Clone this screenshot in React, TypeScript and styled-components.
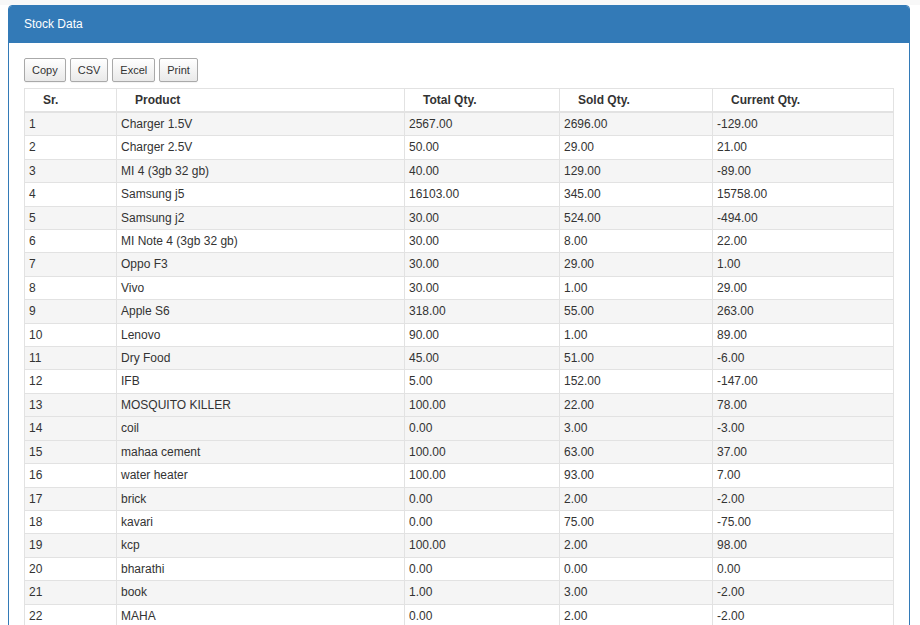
import React from "react";
import styled, { createGlobalStyle } from "styled-components";

const GlobalStyle = createGlobalStyle`
  html, body {
    margin: 0;
    padding: 0;
    background: #fff;
  }
  body {
    font-family: "Liberation Sans", Arial, sans-serif;
    color: #333;
  }
`;

type StockRow = {
  product: string;
  total: string;
  sold: string;
  current: string;
};

const rows: StockRow[] = [
  { product: "Charger 1.5V", total: "2567.00", sold: "2696.00", current: "-129.00" },
  { product: "Charger 2.5V", total: "50.00", sold: "29.00", current: "21.00" },
  { product: "MI 4 (3gb 32 gb)", total: "40.00", sold: "129.00", current: "-89.00" },
  { product: "Samsung j5", total: "16103.00", sold: "345.00", current: "15758.00" },
  { product: "Samsung j2", total: "30.00", sold: "524.00", current: "-494.00" },
  { product: "MI Note 4 (3gb 32 gb)", total: "30.00", sold: "8.00", current: "22.00" },
  { product: "Oppo F3", total: "30.00", sold: "29.00", current: "1.00" },
  { product: "Vivo", total: "30.00", sold: "1.00", current: "29.00" },
  { product: "Apple S6", total: "318.00", sold: "55.00", current: "263.00" },
  { product: "Lenovo", total: "90.00", sold: "1.00", current: "89.00" },
  { product: "Dry Food", total: "45.00", sold: "51.00", current: "-6.00" },
  { product: "IFB", total: "5.00", sold: "152.00", current: "-147.00" },
  { product: "MOSQUITO KILLER", total: "100.00", sold: "22.00", current: "78.00" },
  { product: "coil", total: "0.00", sold: "3.00", current: "-3.00" },
  { product: "mahaa cement", total: "100.00", sold: "63.00", current: "37.00" },
  { product: "water heater", total: "100.00", sold: "93.00", current: "7.00" },
  { product: "brick", total: "0.00", sold: "2.00", current: "-2.00" },
  { product: "kavari", total: "0.00", sold: "75.00", current: "-75.00" },
  { product: "kcp", total: "100.00", sold: "2.00", current: "98.00" },
  { product: "bharathi", total: "0.00", sold: "0.00", current: "0.00" },
  { product: "book", total: "1.00", sold: "3.00", current: "-2.00" },
  { product: "MAHA", total: "0.00", sold: "2.00", current: "-2.00" },
];

const columns = [
  { label: "Sr.", width: 92 },
  { label: "Product", width: 288 },
  { label: "Total Qty.", width: 155 },
  { label: "Sold Qty.", width: 153 },
  { label: "Current Qty.", width: 181 },
];

const exportButtons = ["Copy", "CSV", "Excel", "Print"];

// row that sits under the mouse in the screenshot
const hoveredIndex = 13;

export default function App() {
  return (
    <Page>
      <GlobalStyle />
      <Panel>
        <PanelHeading>Stock Data</PanelHeading>
        <PanelBody>
          <ButtonBar>
            {exportButtons.map((b) => (
              <ExportButton key={b}>{b}</ExportButton>
            ))}
          </ButtonBar>
          <Table>
            <colgroup>
              {columns.map((c) => (
                <col key={c.label} style={{ width: c.width }} />
              ))}
            </colgroup>
            <thead>
              <tr>
                {columns.map((c) => (
                  <HeadCell key={c.label}>{c.label}</HeadCell>
                ))}
              </tr>
            </thead>
            <tbody>
              {rows.map((r, i) => (
                <Row key={i} $striped={i % 2 === 0 || i === hoveredIndex}>
                  <Cell>{i + 1}</Cell>
                  <Cell>{r.product}</Cell>
                  <Cell>{r.total}</Cell>
                  <Cell>{r.sold}</Cell>
                  <Cell>{r.current}</Cell>
                </Row>
              ))}
            </tbody>
          </Table>
        </PanelBody>
      </Panel>
    </Page>
  );
}

const Page = styled.div`
  height: 625px;
  overflow: hidden;
  border-top: 5px solid #f8f8f8;
  padding: 0 10px 0 8px;
  box-sizing: border-box;
`;

const Panel = styled.div`
  border: 1px solid #337ab7;
  border-radius: 4px;
  background: #fff;
`;

const PanelHeading = styled.div`
  background: #337ab7;
  color: #fff;
  font-size: 12px;
  line-height: 17px;
  padding: 10px 15px;
  border-radius: 3px 3px 0 0;
`;

const PanelBody = styled.div`
  padding: 15px;
`;

const ButtonBar = styled.div`
  display: flex;
  gap: 4px;
  margin-bottom: 6px;
`;

const ExportButton = styled.button`
  height: 24px;
  padding: 0 7px;
  font-family: "Liberation Sans", Arial, sans-serif;
  font-size: 11px;
  color: #333;
  border: 1px solid #a9a9a9;
  border-radius: 2px;
  background: linear-gradient(to bottom, #ffffff 0%, #e9e9e9 100%);
  box-shadow: 0 1px 1px rgba(0, 0, 0, 0.05);
`;

const Table = styled.table`
  width: 870px;
  table-layout: fixed;
  border-collapse: collapse;
  border: 1px solid #e2e2e2;
  font-size: 12px;
  color: #333;
`;

const HeadCell = styled.th`
  text-align: left;
  font-weight: bold;
  padding: 3px 18px 2px 18px;
  height: 17px;
  line-height: 17px;
  border: 1px solid #e2e2e2;
  border-bottom: 2px solid #e2e2e2;
`;

const Row = styled.tr<{ $striped: boolean }>`
  background: ${(p) => (p.$striped ? "#f5f5f5" : "#fff")};
`;

const Cell = styled.td`
  padding: 3px 4px;
  line-height: 16.4px;
  border: 1px solid #e2e2e2;
  white-space: nowrap;
  overflow: hidden;
`;
